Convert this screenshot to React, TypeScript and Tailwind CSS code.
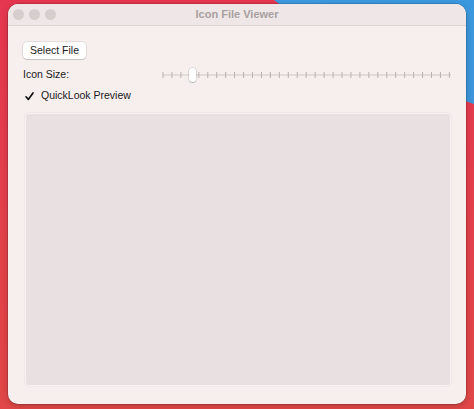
import React from "react";

function Slider() {
  const ticks = Array.from({ length: 33 }, (_, i) => 2 + i * 8.95);
  return (
    <div className="relative h-[16px] w-[292px]">
      <svg width="292" height="16" className="absolute left-0 top-0">
        <line x1="2" y1="8" x2="290" y2="8" stroke="#cfc6c6" strokeWidth="1" />
        {ticks.map((x, i) => (
          <line key={i} x1={x} y1="5" x2={x} y2="11" stroke="#bab1b1" strokeWidth="1" />
        ))}
      </svg>
      <div className="absolute left-[28px] top-[1px] h-[14px] w-[7px] rounded-[3px] bg-white shadow-[0_0_0_0.5px_rgba(0,0,0,0.18),0_1px_1px_rgba(0,0,0,0.15)]" />
    </div>
  );
}

export default function App() {
  return (
    <div
      className="relative h-[409px] w-[474px] overflow-hidden bg-gradient-to-b from-[#e5364f] to-[#e14747]"
      style={{ fontFamily: '"Liberation Sans", Arial, sans-serif' }}
    >
      <svg className="absolute left-0 top-0" width="474" height="409">
        <defs>
          <linearGradient id="bl" x1="0" y1="0" x2="1" y2="1">
            <stop offset="0" stopColor="#3a9be0" />
            <stop offset="1" stopColor="#3d95dc" />
          </linearGradient>
        </defs>
        <path d="M274 0 C 320 35, 400 80, 474 104 L474 0 Z" fill="url(#bl)" />
      </svg>
      <div className="relative pl-[8px] pt-[4px]">
        <div className="flex h-[400px] w-[458px] flex-col overflow-hidden rounded-[10px] bg-[#f7eeee] shadow-[0_0_0_0.5px_rgba(0,0,0,0.25),0_2px_6px_rgba(0,0,0,0.2)]">
          <div className="relative flex h-[22px] items-center border-b border-[#ddd4d4] bg-[#efe7e7]">
            <div className="flex items-center gap-[5px] pl-[5px]">
              <div className="h-[11px] w-[11px] rounded-full bg-[#d6cdcd]" />
              <div className="h-[11px] w-[11px] rounded-full bg-[#d6cdcd]" />
              <div className="h-[11px] w-[11px] rounded-full bg-[#d6cdcd]" />
            </div>
            <div className="absolute inset-0 flex items-center justify-center text-[11px] font-bold text-[#a8a0a0]">
              Icon File Viewer
            </div>
          </div>
          <div className="flex flex-1 flex-col pb-[18px] pl-[15px] pr-[15px] text-[10.5px] text-[#1a1a1a]">
            <div className="mt-[16px] flex">
              <div className="flex h-[17px] items-center rounded-[4px] bg-white px-[7px] shadow-[0_0_0_0.5px_rgba(0,0,0,0.15),0_1px_1px_rgba(0,0,0,0.12)]">
                Select File
              </div>
            </div>
            <div className="mt-[8px] flex h-[16px] items-center">
              <div className="w-[139px]">Icon Size:</div>
              <Slider />
            </div>
            <div className="mt-[5px] flex h-[16px] items-center">
              <svg width="11" height="11" viewBox="0 0 11 11" className="mr-[6px] ml-[1px]">
                <path d="M2 5.8 L4.3 8.4 L9 2" fill="none" stroke="#111" strokeWidth="1.7" strokeLinecap="round" strokeLinejoin="round" />
              </svg>
              <span>QuickLook Preview</span>
            </div>
            <div className="ml-[2px] mt-[9px] flex-1 rounded-[4px] border border-[#f8f3f3] bg-[#e9e1e1] shadow-[0_0_0_0.5px_rgba(0,0,0,0.06)]" />
          </div>
        </div>
      </div>
    </div>
  );
}
